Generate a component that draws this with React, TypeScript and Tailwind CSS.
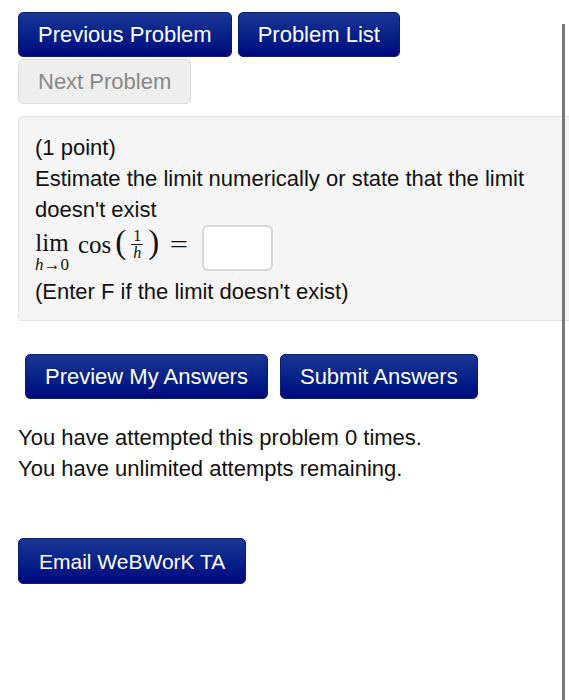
import React from "react";

const base =
  "h-[45px] flex items-center rounded-[5px] border border-[#0a1f70] bg-linear-to-b from-[#1a3594] to-[#00057e] text-white leading-none";
const btn = `${base} px-[19px] text-[22px]`;
const btnEmail = `${base} px-[20px] text-[21px] h-[46px]`;

export default function App() {
  return (
    <div className="relative w-[569px] h-[700px] overflow-hidden bg-white text-[#111] font-['Liberation_Sans',Arial,sans-serif] text-[22px] leading-[31px]">
      <div className="pl-[18px] pt-[12px] flex flex-col items-start gap-[2px]">
        <div className="flex gap-[6px]">
          <div className={btn}>Previous Problem</div>
          <div className={btn}>Problem List</div>
        </div>
        <div className="h-[45px] px-[19px] flex items-center rounded-[5px] border border-[#dcdcdc] bg-[#eeeeee] text-[#888] text-[22px] leading-none">
          Next Problem
        </div>
      </div>

      <div className="ml-[18px] mt-[12px] w-[570px] rounded-[4px] border border-[#e3e3e3] bg-[#f5f5f5] pl-[16px] pt-[15px] pb-[13px]">
        <div>(1 point)</div>
        <div>Estimate the limit numerically or state that the limit</div>
        <div>doesn't exist</div>
        <div className="flex items-start h-[51px] font-['Liberation_Serif','Times_New_Roman',serif]">
          <div className="flex flex-col items-center mt-[6px]">
            <span className="text-[25px] leading-[24px]">lim</span>
            <span className="text-[17px] leading-[18px] mt-[1px]">
              <i>h</i>→0
            </span>
          </div>
          <div className="flex items-center mt-[4px] h-[30px] ml-[9px]">
            <span className="text-[25px] leading-none">cos</span>
            <span className="text-[33px] leading-none ml-[4px] mb-[3px] font-light">(</span>
            <span className="flex flex-col items-center mx-[5px] text-[16px] leading-[14px]">
              <span>1</span>
              <span className="w-[12px] h-[1px] bg-[#111] my-[1px]"></span>
              <i>h</i>
            </span>
            <span className="text-[33px] leading-none mb-[3px] font-light">)</span>
            <span className="inline-block text-[24px] leading-none ml-[13px] scale-x-[1.35]">=</span>
          </div>
          <div className="ml-[16px] w-[71px] h-[46px] rounded-[6px] border-2 border-[#d6d6d6] bg-white"></div>
        </div>
        <div>(Enter F if the limit doesn't exist)</div>
      </div>

      <div className="ml-[25px] mt-[33px] flex gap-[12px]">
        <div className={btn}>Preview My Answers</div>
        <div className={btn}>Submit Answers</div>
      </div>

      <div className="ml-[18px] mt-[23px]">
        <div>You have attempted this problem 0 times.</div>
        <div>You have unlimited attempts remaining.</div>
      </div>

      <div className="ml-[18px] mt-[54px] flex">
        <div className={btnEmail}>Email WeBWorK TA</div>
      </div>

      <div className="absolute left-[562px] top-[24px] w-[3px] h-[676px] bg-[#777]"></div>
    </div>
  );
}
